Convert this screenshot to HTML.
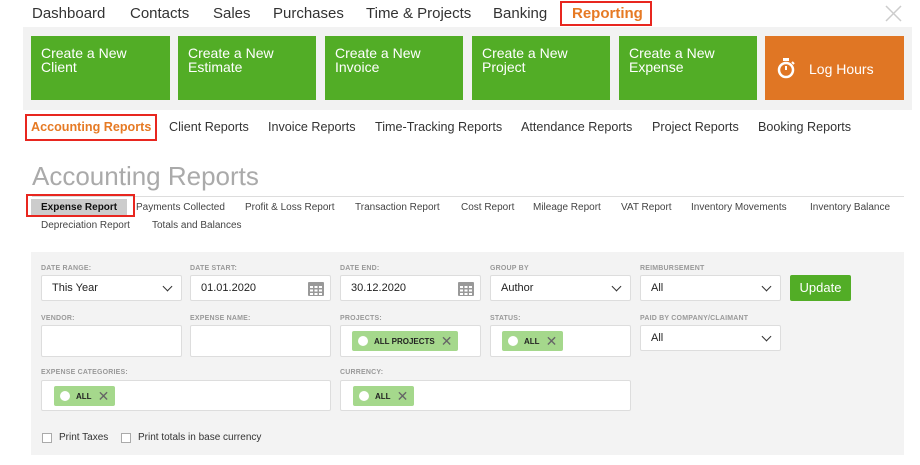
<!DOCTYPE html>
<html><head><meta charset="utf-8"><style>
*{box-sizing:border-box;margin:0;padding:0}
body{width:920px;height:465px;background:#fff;font-family:"Liberation Sans",sans-serif;position:relative;overflow:hidden;color:#333}
.a{position:absolute;white-space:nowrap}
.nav{font-size:15px;color:#333;top:5px}
.band{left:23px;top:27px;width:889px;height:83px;background:#f2f2f2}
.tile{top:36px;height:64px;background:#52ad26;color:#fff;font-size:14px;line-height:14px;padding:10px 10px}
.rn{font-size:12.6px;top:120px;color:#333}
.st{font-size:10px;top:202px;color:#444}
.st2{top:220px}
.panel{left:31px;top:252px;width:873px;height:203px;background:#f3f3f3}
.lb{font-size:7px;font-weight:bold;color:#999;letter-spacing:.2px}
.in{background:#fff;border:1px solid #ddd;border-radius:2px;font-size:11px;color:#222;padding:0 10px;display:flex;align-items:center}
.chev{position:absolute;right:10px;top:7px;width:7px;height:7px;border-right:1.5px solid #333;border-bottom:1.5px solid #333;transform:rotate(45deg)}
.tag{position:absolute;background:#a5d88c;border-radius:2px;height:20px;font-size:8px;font-weight:bold;color:#222;display:flex;align-items:center;padding:0 6px}
.tag i{display:inline-block;width:10px;height:10px;border-radius:50%;background:#fff;margin-right:6px}
.tag b{font-weight:normal;font-size:14px;color:#666;margin-left:6px}
.box{border:2px solid #e8261f}
.cb{width:10px;height:10px;border:1px solid #aaa;background:#fff}
</style></head><body>
<div class="a nav" style="left:32px">Dashboard</div>
<div class="a nav" style="left:130px">Contacts</div>
<div class="a nav" style="left:213px">Sales</div>
<div class="a nav" style="left:273px">Purchases</div>
<div class="a nav" style="left:366px">Time &amp; Projects</div>
<div class="a nav" style="left:493px">Banking</div>
<div class="a box" style="left:560px;top:1px;width:92px;height:25px"></div>
<div class="a nav" style="left:572px;color:#e67a24;font-weight:bold">Reporting</div>
<svg class="a" style="left:885px;top:5px" width="17" height="17" viewBox="0 0 17 17"><path d="M1 1L16 16M16 1L1 16" stroke="#ccc" stroke-width="1.5"/></svg>
<div class="a band"></div>
<div class="a tile" style="left:31px;width:139px">Create a New<br>Client</div>
<div class="a tile" style="left:178px;width:138px">Create a New<br>Estimate</div>
<div class="a tile" style="left:325px;width:138px">Create a New<br>Invoice</div>
<div class="a tile" style="left:472px;width:138px">Create a New<br>Project</div>
<div class="a tile" style="left:619px;width:138px">Create a New<br>Expense</div>
<div class="a tile" style="left:765px;width:139px;background:#e07624;font-size:14px;padding:26px 0 0 44px">Log Hours
<svg style="position:absolute;left:11px;top:21px" width="20" height="22" viewBox="0 0 20 22"><rect x="7" y="1" width="6" height="3" fill="#fff"/><circle cx="10" cy="13" r="7" fill="none" stroke="#fff" stroke-width="2.5"/><path d="M10 13V9" stroke="#fff" stroke-width="2"/><path d="M16 5l2 2" stroke="#fff" stroke-width="2"/></svg></div>
<div class="a box" style="left:25px;top:114px;width:132px;height:27px"></div>
<div class="a rn" style="left:31px;color:#e67a24;font-weight:bold">Accounting Reports</div>
<div class="a rn" style="left:169px">Client Reports</div>
<div class="a rn" style="left:268px">Invoice Reports</div>
<div class="a rn" style="left:375px">Time-Tracking Reports</div>
<div class="a rn" style="left:521px">Attendance Reports</div>
<div class="a rn" style="left:652px">Project Reports</div>
<div class="a rn" style="left:758px">Booking Reports</div>
<div class="a" style="left:32px;top:161px;font-size:26px;color:#aaa">Accounting Reports</div>
<div class="a" style="left:32px;top:196px;width:872px;height:1px;background:#ddd"></div>
<div class="a" style="left:31px;top:199px;width:96px;height:16px;background:#ccc"></div>
<div class="a box" style="left:26px;top:194px;width:109px;height:23px"></div>
<div class="a st" style="left:41px;font-weight:bold;color:#111">Expense Report</div>
<div class="a st" style="left:136px">Payments Collected</div>
<div class="a st" style="left:245px">Profit &amp; Loss Report</div>
<div class="a st" style="left:355px">Transaction Report</div>
<div class="a st" style="left:461px">Cost Report</div>
<div class="a st" style="left:533px">Mileage Report</div>
<div class="a st" style="left:621px">VAT Report</div>
<div class="a st" style="left:691px">Inventory Movements</div>
<div class="a st" style="left:810px">Inventory Balance</div>
<div class="a st st2" style="left:41px">Depreciation Report</div>
<div class="a st st2" style="left:152px">Totals and Balances</div>
<div class="a panel"></div>
<div class="a lb" style="left:41px;top:265px">DATE RANGE:</div>
<div class="a lb" style="left:190px;top:265px">DATE START:</div>
<div class="a lb" style="left:340px;top:265px">DATE END:</div>
<div class="a lb" style="left:490px;top:265px">GROUP BY</div>
<div class="a lb" style="left:640px;top:265px">REIMBURSEMENT</div>
<div class="a in" style="left:41px;top:275px;width:141px;height:26px">This Year<span class="chev"></span></div>
<div class="a in" style="left:190px;top:275px;width:141px;height:26px">01.01.2020<svg style="position:absolute;right:6px;top:4px" width="16" height="16" viewBox="0 0 16 16" fill="#999"><rect x="0" y="2" width="16" height="14" rx="1"/><g fill="#fff"><rect x="2" y="6" width="3" height="2"/><rect x="6.5" y="6" width="3" height="2"/><rect x="11" y="6" width="3" height="2"/><rect x="2" y="9.5" width="3" height="2"/><rect x="6.5" y="9.5" width="3" height="2"/><rect x="11" y="9.5" width="3" height="2"/><rect x="2" y="13" width="3" height="2"/><rect x="6.5" y="13" width="3" height="2"/><rect x="11" y="13" width="3" height="2"/></g></svg></div>
<div class="a in" style="left:340px;top:275px;width:141px;height:26px">30.12.2020<svg style="position:absolute;right:6px;top:4px" width="16" height="16" viewBox="0 0 16 16" fill="#999"><rect x="0" y="2" width="16" height="14" rx="1"/><g fill="#fff"><rect x="2" y="6" width="3" height="2"/><rect x="6.5" y="6" width="3" height="2"/><rect x="11" y="6" width="3" height="2"/><rect x="2" y="9.5" width="3" height="2"/><rect x="6.5" y="9.5" width="3" height="2"/><rect x="11" y="9.5" width="3" height="2"/><rect x="2" y="13" width="3" height="2"/><rect x="6.5" y="13" width="3" height="2"/><rect x="11" y="13" width="3" height="2"/></g></svg></div>
<div class="a in" style="left:490px;top:275px;width:141px;height:26px">Author<span class="chev"></span></div>
<div class="a in" style="left:640px;top:275px;width:141px;height:26px">All<span class="chev"></span></div>
<div class="a" style="left:790px;top:275px;width:61px;height:26px;background:#52ad26;border-radius:2px;color:#fff;font-size:13px;text-align:center;line-height:26px">Update</div>
<div class="a lb" style="left:41px;top:315px">VENDOR:</div>
<div class="a lb" style="left:190px;top:315px">EXPENSE NAME:</div>
<div class="a lb" style="left:340px;top:315px">PROJECTS:</div>
<div class="a lb" style="left:490px;top:315px">STATUS:</div>
<div class="a lb" style="left:640px;top:315px">PAID BY COMPANY/CLAIMANT</div>
<div class="a in" style="left:41px;top:325px;width:141px;height:32px"></div>
<div class="a in" style="left:190px;top:325px;width:141px;height:32px"></div>
<div class="a in" style="left:340px;top:325px;width:141px;height:32px"><span class="tag" style="left:11px;top:5px"><i></i>ALL PROJECTS<b>✕</b></span></div>
<div class="a in" style="left:490px;top:325px;width:141px;height:32px"><span class="tag" style="left:11px;top:5px"><i></i>ALL<b>✕</b></span></div>
<div class="a in" style="left:640px;top:325px;width:141px;height:26px">All<span class="chev"></span></div>
<div class="a lb" style="left:41px;top:369px">EXPENSE CATEGORIES:</div>
<div class="a lb" style="left:340px;top:369px">CURRENCY:</div>
<div class="a in" style="left:41px;top:380px;width:290px;height:31px"><span class="tag" style="left:12px;top:5px"><i></i>ALL<b>✕</b></span></div>
<div class="a in" style="left:340px;top:380px;width:291px;height:31px"><span class="tag" style="left:12px;top:5px"><i></i>ALL<b>✕</b></span></div>
<div class="a cb" style="left:42px;top:433px"></div>
<div class="a" style="left:59px;top:432px;font-size:10px;color:#333">Print Taxes</div>
<div class="a cb" style="left:121px;top:433px"></div>
<div class="a" style="left:138px;top:432px;font-size:10px;color:#333">Print totals in base currency</div>
</body></html>
